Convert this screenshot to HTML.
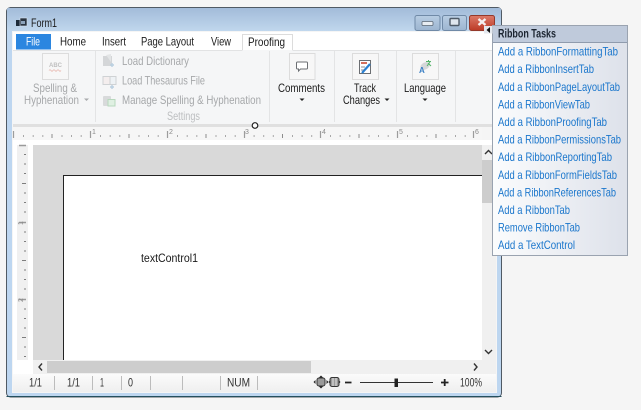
<!DOCTYPE html>
<html>
<head>
<meta charset="utf-8">
<style>
html,body{margin:0;padding:0;background:#f5f5f5;width:641px;height:410px;overflow:hidden}
svg{display:block}
text{font-family:"Liberation Sans",sans-serif;font-size:12px;fill:#1a1a1a}
.g{fill:#a6a8aa}
.l{fill:#1a76cc}
.m{fill:#8a8a8a;font-size:7px}
</style>
</head>
<body>
<svg width="641" height="410" viewBox="0 0 641 410" xmlns="http://www.w3.org/2000/svg">
<defs>
<linearGradient id="tb" x1="0" y1="0" x2="0" y2="1"><stop offset="0" stop-color="#a2bbd9"/><stop offset="1" stop-color="#c0d7ed"/></linearGradient>
<linearGradient id="pn" x1="0" y1="0" x2="1" y2="0"><stop offset="0" stop-color="#fbfcfd"/><stop offset="1" stop-color="#dde1ea"/></linearGradient>
<linearGradient id="btn" x1="0" y1="0" x2="0" y2="1"><stop offset="0" stop-color="#b8cde3"/><stop offset="1" stop-color="#9cb5d0"/></linearGradient>
<linearGradient id="cl" x1="0" y1="0" x2="0" y2="1"><stop offset="0" stop-color="#dc7a69"/><stop offset="1" stop-color="#bc3a26"/></linearGradient>
<linearGradient id="st" x1="0" y1="0" x2="0" y2="1"><stop offset="0" stop-color="#fbfbfb"/><stop offset="1" stop-color="#efefef"/></linearGradient>
</defs>

<!-- window -->
<rect x="6.500" y="7.500" width="495" height="389.500" rx="4" fill="#bdd6f0" stroke="#505a64"/>
<path d="M7 10a2 2 0 0 1 3-2h489a2 2 0 0 1 2 2v21H7z" fill="url(#tb)"/>
<path d="M6.500 396.500h495" stroke="#24505f" stroke-width="1"/>
<!-- title icon -->
<rect x="16" y="20" width="5" height="6" fill="#1d2b3a"/>
<rect x="20" y="18" width="7" height="8" fill="#2a3440" stroke="#d8e2ee" stroke-width=".6"/>
<rect x="21" y="21" width="4" height="3" fill="#8da3bb"/>
<text x="31" y="27" textLength="26" lengthAdjust="spacingAndGlyphs">Form1</text>
<!-- title buttons -->
<rect x="415" y="15.500" width="25" height="15" rx="2" fill="url(#btn)" stroke="#708aa7"/>
<rect x="422" y="21.500" width="11" height="4" rx="1" fill="#e8edf2" stroke="#5a6673" stroke-width=".8"/>
<rect x="442.500" y="15.500" width="24" height="15" rx="2" fill="url(#btn)" stroke="#708aa7"/>
<rect x="450" y="18.500" width="9" height="7" rx="1" fill="#dfe6ee" stroke="#4f5b68" stroke-width="1.400"/>
<rect x="469.500" y="15.500" width="25" height="15" rx="2" fill="url(#cl)" stroke="#94392b"/>
<path d="M478.500 19l7 6M485.500 19l-7 6" stroke="#f5f0f0" stroke-width="2.400"/>

<!-- client -->
<rect x="12" y="31" width="485" height="362" fill="#f5f5f5"/>
<rect x="13" y="32" width="483" height="18" fill="#fff"/>
<rect x="16" y="34" width="35" height="15.500" fill="#2b86e0"/>
<text x="26" y="45.500" textLength="14" lengthAdjust="spacingAndGlyphs" style="fill:#fff">File</text>
<text x="60" y="45.500" textLength="26" lengthAdjust="spacingAndGlyphs">Home</text>
<text x="102" y="45.500" textLength="24" lengthAdjust="spacingAndGlyphs">Insert</text>
<text x="141" y="45.500" textLength="53" lengthAdjust="spacingAndGlyphs">Page Layout</text>
<text x="211" y="45.500" textLength="20" lengthAdjust="spacingAndGlyphs">View</text>
<path d="M242.500 50V34.500h50V50" fill="#fff" stroke="#dcdcdc"/>
<text x="248" y="46" textLength="37" lengthAdjust="spacingAndGlyphs">Proofing</text>

<!-- ribbon -->
<rect x="13" y="50" width="483" height="74" fill="#f5f6f7"/>
<path d="M13 50.500H242.500M292.500 50.500H496" stroke="#e2e3e4"/>
<path d="M95.500 51v71M269.500 51v71M334.500 51v71M396.500 51v71M455.500 51v71" stroke="#e3e4e5"/>
<rect x="13" y="124" width="483" height="3" fill="#e0e0e0"/>

<!-- spelling -->
<rect x="42.500" y="53.500" width="26" height="26" fill="#f7f7f7" stroke="#dcdcdc"/>
<text x="49" y="67" textLength="13" lengthAdjust="spacingAndGlyphs" style="font-size:6px;fill:#c0c0c0;font-weight:bold">ABC</text>
<path d="M49 70.500q1-1.500 2 0t2 0 2 0 2 0 2 0 2 0" fill="none" stroke="#e8b8b0" stroke-width=".8"/>
<text class="g" x="33" y="92" textLength="44" lengthAdjust="spacingAndGlyphs">Spelling &amp;</text>
<text class="g" x="24" y="104" textLength="55" lengthAdjust="spacingAndGlyphs">Hyphenation</text>
<path d="M84 98.500h5l-2.500 2.500z" fill="#a9abad"/>

<!-- settings -->
<rect x="103" y="56" width="9" height="10" fill="#d4d6d8"/>
<path d="M106 55l5-1v8" fill="#e3e5e6"/>
<path d="M112 63v4M110 65h4" stroke="#b9cfe0" stroke-width="1.400"/>
<rect x="103" y="76.500" width="7" height="8" fill="#f4eeee" stroke="#cfd2d4"/>
<rect x="110" y="76.500" width="6" height="8" fill="#eef2f5" stroke="#cfd2d4"/>
<path d="M112 85v4M110 87h4" stroke="#b9cfe0" stroke-width="1.400"/>
<rect x="103" y="96" width="8" height="10" rx="1" fill="#d8dadb"/>
<rect x="108" y="99.500" width="7" height="6.500" fill="#dff0e2" stroke="#b7d8bd"/>
<text class="g" x="122" y="65" textLength="67" lengthAdjust="spacingAndGlyphs">Load Dictionary</text>
<text class="g" x="122" y="84.500" textLength="83" lengthAdjust="spacingAndGlyphs">Load Thesaurus File</text>
<text class="g" x="122" y="104" textLength="139" lengthAdjust="spacingAndGlyphs">Manage Spelling &amp; Hyphenation</text>
<text x="167" y="120" textLength="33" lengthAdjust="spacingAndGlyphs" style="fill:#bdbfc1">Settings</text>

<!-- comments -->
<rect x="289.500" y="53.500" width="25.500" height="26" fill="#f7f7f7" stroke="#dcdcdc"/>
<path d="M297.500 62h9a1 1 0 0 1 1 1v5a1 1 0 0 1-1 1h-6l-2 2v-2h-1a1 1 0 0 1-1-1v-5a1 1 0 0 1 1-1z" fill="#fff" stroke="#6b6e72"/>
<text x="278" y="92" textLength="47" lengthAdjust="spacingAndGlyphs">Comments</text>
<path d="M299.500 98.500h5l-2.500 2.500z" fill="#222"/>

<!-- track -->
<rect x="352.500" y="53.500" width="26" height="26" fill="#f7f7f7" stroke="#dcdcdc"/>
<rect x="359.500" y="60.500" width="11" height="13" fill="#fff" stroke="#6b6e72"/>
<path d="M361 63h6" stroke="#d6705c" stroke-width="2"/>
<path d="M361 67h4M361 70h3" stroke="#8a8d90"/>
<path d="M362 73l8-9" stroke="#2b7fd0" stroke-width="2.200"/>
<text x="354" y="92" textLength="22" lengthAdjust="spacingAndGlyphs">Track</text>
<text x="343" y="104" textLength="37" lengthAdjust="spacingAndGlyphs">Changes</text>
<path d="M384.500 98.500h5l-2.500 2.500z" fill="#222"/>

<!-- language -->
<rect x="412.500" y="53.500" width="26" height="26" fill="#f7f7f7" stroke="#dcdcdc"/>
<ellipse cx="425" cy="66" rx="5" ry="3.500" fill="#d5d7d9" transform="rotate(-30 425 66)"/>
<text x="419" y="73" style="font-size:8px;font-weight:bold;fill:#3a7fc4">A</text>
<path d="M426 61.500h5M428.500 60v2M427 66l3-4M428 63l3 3" fill="none" stroke="#55b56a" stroke-width="1"/>
<text x="404" y="92" textLength="42" lengthAdjust="spacingAndGlyphs">Language</text>
<path d="M422.500 98.500h5l-2.500 2.500z" fill="#222"/>

<!-- ruler -->
<rect x="13" y="127" width="469" height="13" fill="#f6f6f6"/>
<path d="M13.500 131v7M90.500 131v7M167.500 131v7M244.500 131v7M320.500 131v7M397.500 131v7M473.500 131v7" stroke="#9c9c9c" stroke-width="1.200"/>
<path d="M23 136h1M32.700 136h1M42.300 136h1M61.500 136h1M71 136h1M80.700 136h1M100 136h1M109.700 136h1M119.300 136h1M138.500 136h1M148 136h1M157.700 136h1M177 136h1M186.700 136h1M196.300 136h1M215.500 136h1M225 136h1M234.700 136h1M253.600 136h1M263.200 136h1M272.800 136h1M292 136h1M301.600 136h1M311.200 136h1M330 136h1M339.700 136h1M349.300 136h1M368.500 136h1M378 136h1M387.700 136h1M407 136h1M416.700 136h1M426.300 136h1M445.500 136h1M455 136h1M464.700 136h1" stroke="#7a7a7a" stroke-width="1.200"/>
<path d="M52 134v4M129 134v4M206 134v4M282.500 134v4M359 134v4M436 134v4" stroke="#8c8c8c"/>
<text class="m" x="92" y="134">1</text>
<text class="m" x="169" y="134">2</text>
<text class="m" x="245" y="134">3</text>
<text class="m" x="322" y="134">4</text>
<text class="m" x="399" y="134">5</text>
<text class="m" x="475" y="134">6</text>
<circle cx="255" cy="125.500" r="2.800" fill="#fff" stroke="#222" stroke-width="1.200"/>

<!-- doc area -->
<rect x="13" y="140" width="483" height="234" fill="#fff"/>
<rect x="17" y="145" width="11" height="215" fill="#f0f0f0"/>
<path d="M19 145.500h7M19 222.500h7M19 299.500h7" stroke="#9a9a9a" stroke-width="1.400"/>
<path d="M24 154.500h2M24 164h2M24 173.500h2M22 183.500h4M24 193h2M24 202.500h2M24 212h2M24 232h2M24 241.500h2M24 251h2M22 260.500h4M24 270h2M24 279.500h2M24 289h2M24 309h2M24 318.500h2M24 328h2M22 337.500h4M24 347h2M24 356.500h2" stroke="#7e7e7e" stroke-width="1"/>
<text class="m" x="0" y="0" transform="translate(23,225) rotate(-90)">1</text>
<text class="m" x="0" y="0" transform="translate(23,302) rotate(-90)">2</text>
<rect x="33" y="145" width="449" height="215" fill="#d9d9d9"/>
<rect x="64" y="176" width="418" height="184" fill="#fff"/>
<path d="M63.500 360V175.500H482" fill="none" stroke="#222" stroke-width="1"/>
<text x="141" y="262" textLength="57" lengthAdjust="spacingAndGlyphs">textControl1</text>

<!-- v scrollbar -->
<rect x="482" y="145" width="14" height="215" fill="#f0f0f0"/>
<rect x="482" y="160" width="13.500" height="43" fill="#cdcdcd"/>
<path d="M485 154l3.500-3.500 3.500 3.500M485 350l3.500 3.500 3.500-3.500" fill="none" stroke="#333" stroke-width="1.400"/>
<!-- h scrollbar -->
<rect x="33" y="360" width="463" height="14" fill="#f0f0f0"/>
<rect x="47" y="361" width="264" height="12" fill="#cdcdcd"/>
<path d="M42 363.500l-3 3.500 3 3.500M474 363.500l3 3.500-3 3.500" fill="none" stroke="#333" stroke-width="1.400"/>

<!-- status -->
<rect x="13" y="374" width="483" height="18" fill="url(#st)"/>
<path d="M54.500 376v14M92.500 376v14M121.500 376v14M150.500 376v14M182.500 376v14M220.500 376v14M257.500 376v14" stroke="#bcbcbc"/>
<text x="29" y="386.500" textLength="13" lengthAdjust="spacingAndGlyphs" style="fill:#333">1/1</text>
<text x="67" y="386.500" textLength="13" lengthAdjust="spacingAndGlyphs" style="fill:#333">1/1</text>
<text x="100" y="386.500" textLength="4" lengthAdjust="spacingAndGlyphs" style="fill:#333">1</text>
<text x="128" y="386.500" textLength="5" lengthAdjust="spacingAndGlyphs" style="fill:#333">0</text>
<text x="227" y="386.500" textLength="23" lengthAdjust="spacingAndGlyphs" style="fill:#333">NUM</text>
<rect x="317" y="378" width="8" height="8" rx="2" fill="#9a9a9a" stroke="#333"/>
<path d="M321 375.500l-2 2h4zM321 388.500l-2-2h4zM313.500 382l2-2v4zM328.500 382l-2-2v4z" fill="#222"/>
<rect x="330" y="377.500" width="9" height="9" rx="2" fill="#9a9a9a" stroke="#333"/>
<path d="M333 378v8M336 378v8" stroke="#e4e4e4"/>
<path d="M328.500 382l2-2v4zM340.500 382l-2-2v4z" fill="#222"/>
<path d="M345 382.500h6.500M441 382.500h7.500M444.700 379v7" stroke="#222" stroke-width="1.800"/>
<path d="M360 382.500h73" stroke="#333"/>
<rect x="394.500" y="378.500" width="3.500" height="8.500" fill="#222"/>
<text x="460" y="386.500" textLength="22" lengthAdjust="spacingAndGlyphs" style="fill:#333">100%</text>

<!-- tasks panel -->
<rect x="492.500" y="25.500" width="135" height="230" fill="url(#pn)" stroke="#9aa3b0"/>
<rect x="493" y="26" width="134" height="16" fill="#bfcadb"/>
<path d="M493 42.500h134" stroke="#8f9bad"/>
<text x="498" y="37.500" textLength="58" lengthAdjust="spacingAndGlyphs" style="font-weight:bold;fill:#1b2430">Ribbon Tasks</text>
<rect x="484" y="26" width="8.500" height="7.500" fill="#e4e8ee"/>
<path d="M490 27l-3.500 3 3.500 3z" fill="#111"/>
<text class="l" x="498" y="55.500" textLength="120" lengthAdjust="spacingAndGlyphs">Add a RibbonFormattingTab</text>
<text class="l" x="498" y="73" textLength="96" lengthAdjust="spacingAndGlyphs">Add a RibbonInsertTab</text>
<text class="l" x="498" y="91" textLength="122" lengthAdjust="spacingAndGlyphs">Add a RibbonPageLayoutTab</text>
<text class="l" x="498" y="108.500" textLength="92" lengthAdjust="spacingAndGlyphs">Add a RibbonViewTab</text>
<text class="l" x="498" y="126" textLength="109" lengthAdjust="spacingAndGlyphs">Add a RibbonProofingTab</text>
<text class="l" x="498" y="143.500" textLength="123" lengthAdjust="spacingAndGlyphs">Add a RibbonPermissionsTab</text>
<text class="l" x="498" y="161" textLength="114" lengthAdjust="spacingAndGlyphs">Add a RibbonReportingTab</text>
<text class="l" x="498" y="179" textLength="119" lengthAdjust="spacingAndGlyphs">Add a RibbonFormFieldsTab</text>
<text class="l" x="498" y="196.500" textLength="118" lengthAdjust="spacingAndGlyphs">Add a RibbonReferencesTab</text>
<text class="l" x="498" y="214" textLength="72" lengthAdjust="spacingAndGlyphs">Add a RibbonTab</text>
<text class="l" x="498" y="231.500" textLength="82" lengthAdjust="spacingAndGlyphs">Remove RibbonTab</text>
<text class="l" x="498" y="249" textLength="77" lengthAdjust="spacingAndGlyphs">Add a TextControl</text>
</svg>
</body>
</html>
